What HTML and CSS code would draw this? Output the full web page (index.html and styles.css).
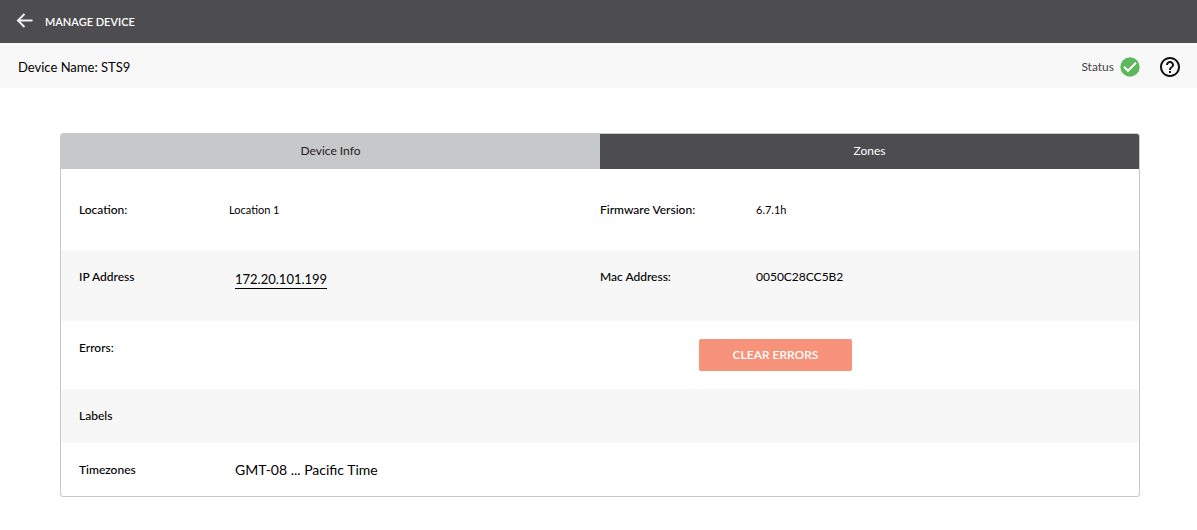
FILE: index.html
```html
<!DOCTYPE html>
<html lang="en">
<head>
<meta charset="utf-8">
<title>Manage Device</title>
<link rel="stylesheet" href="styles.css">
</head>
<body>
<header class="topbar">
  <button class="icon-button" type="button" aria-label="Back">
    <svg width="18" height="18" viewBox="0 0 18 18" fill="none" stroke="#eee" stroke-width="2"><path d="M16.5 7.500H2.500M8.500 1L2 7.500l6.500 6.500"/></svg>
  </button>
  <h1 class="title">MANAGE DEVICE</h1>
</header>
<section class="subbar">
  <p class="device-name">Device Name: STS9</p>
  <div class="status">
    <span class="status-label">Status</span>
    <svg width="20" height="20" viewBox="0 0 20 20" role="img" aria-label="OK"><circle cx="10" cy="10" r="9.7" fill="#5cb85c"/><path d="M4 9.800l4 4 8-8" fill="none" stroke="#fff" stroke-width="2"/></svg>
  </div>
  <button class="icon-button" type="button" aria-label="Help">
    <svg width="20" height="20" viewBox="2 2 20 20" fill="#111"><path d="M11 18h2v-2h-2v2zm1-16C6.480 2 2 6.480 2 12s4.480 10 10 10 10-4.480 10-10S17.520 2 12 2zm0 18c-4.410 0-8-3.590-8-8s3.590-8 8-8 8 3.590 8 8-3.590 8-8 8zm0-14c-2.210 0-4 1.790-4 4h2c0-1.100.9-2 2-2s2 .9 2 2c0 2-3 1.750-3 5h2c0-2.250 3-2.500 3-5 0-2.210-1.790-4-4-4z"/></svg>
  </button>
</section>
<main class="content">
  <div class="card">
    <div class="tabs" role="tablist">
      <button class="tab tab-active" type="button" role="tab" aria-selected="true">Device Info</button>
      <button class="tab" type="button" role="tab" aria-selected="false">Zones</button>
    </div>
    <div class="row row-first">
      <div class="field"><span class="label">Location:</span><span class="value">Location 1</span></div>
      <div class="field field-right"><span class="label">Firmware Version:</span><span class="value">6.7.1h</span></div>
    </div>
    <div class="row row-shaded row-tall">
      <div class="field"><span class="label">IP Address</span><span class="value value-large"><a class="link" href="#ip">172.20.101.199</a></span></div>
      <div class="field field-right"><span class="label">Mac Address:</span><span class="value value-code">0050C28CC5B2</span></div>
    </div>
    <div class="row">
      <div class="field"><span class="label">Errors:</span></div>
      <div class="field field-action"><button class="clear" type="button">CLEAR ERRORS</button></div>
    </div>
    <div class="row row-shaded">
      <div class="field"><span class="label">Labels</span></div>
    </div>
    <div class="row row-last">
      <div class="field"><span class="label">Timezones</span><span class="value value-large">GMT-08 ... Pacific Time</span></div>
    </div>
  </div>
</main>
</body>
</html>
```
FILE: styles.css
```css
* { box-sizing: border-box; }
body {
  margin: 0;
  background: #fff;
  color: #000;
  font: 11px/18px Lato, "Liberation Sans", sans-serif;
}
button { font: inherit; border: 0; cursor: pointer; }
.icon-button { display: flex; padding: 0; background: none; }
.topbar {
  display: flex;
  align-items: center;
  gap: 11px;
  height: 43px;
  padding: 0 16px;
  background: #4d4d4f;
  color: #fff;
}
.title { margin: 0; font-size: 11px; font-weight: 600; }
.subbar {
  display: flex;
  align-items: center;
  gap: 20px;
  height: 45px;
  padding: 3px 17px 0 18px;
  background: #f8f8f8;
}
.device-name { margin: 0 auto 0 0; font-size: 13px; }
.status { display: flex; align-items: center; gap: 6px; color: #444; }
.status-label { font-size: 12px; }
.content { padding: 45px 57px 32px 60px; }
.card { border: 1px solid #c7c8ca; border-radius: 3px; overflow: hidden; }
.tabs { display: grid; grid-template-columns: 1fr 1fr; }
.tab { height: 35px; padding: 0 0 2px; background: #4d4d4f; color: #fff; font-size: 12px; }
.tab-active { background: #c7c8ca; color: #222; }
.row {
  display: grid;
  grid-template-columns: 1fr 1fr;
  padding: 18px 0;
}
.row-first { padding: 32px 0 31px; }
.row-tall { padding-bottom: 32px; }
.row-last { padding-bottom: 17px; }
.row-shaded { background: #f7f7f7; }
.field { display: flex; padding-left: 18px; }
.field-right { padding-left: 0; }
.field-action { padding-left: 99px; }
.label { width: 150px; font-size: 12px; font-weight: 500; }
.field-right .label { width: 156px; }
.value-code { font-size: 12px; }
.value-large { padding-left: 6px; font-size: 14px; }
.link { display: block; color: #000; font-size: 13px; text-decoration: none; border-bottom: 1px solid #000; padding-top: 2px; }
.clear {
  height: 32px;
  width: 153px;
  border-radius: 2px;
  background: #f7937b;
  color: #fff;
  font-size: 12px;
  font-weight: 600;
}
```
